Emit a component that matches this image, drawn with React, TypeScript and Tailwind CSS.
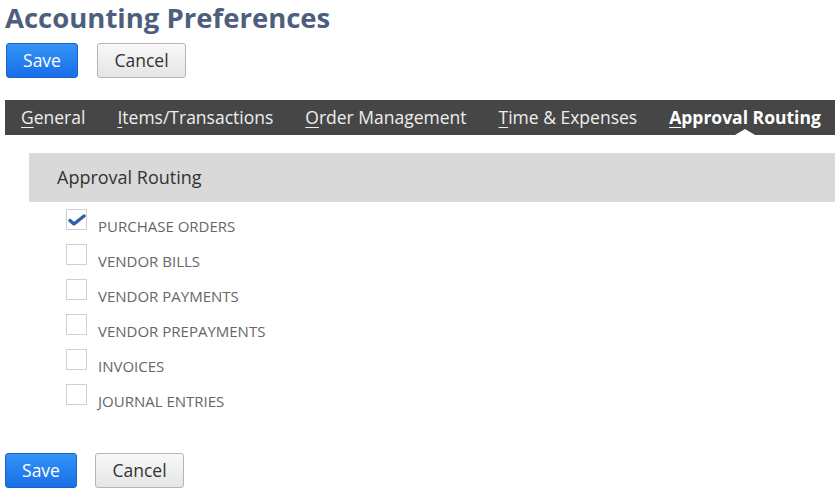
const font = { fontFamily: '"Open Sans", "Noto Sans", sans-serif' };

const tabs = [
  { key: 'G', rest: 'eneral' },
  { key: 'I', rest: 'tems/Transactions' },
  { key: 'O', rest: 'rder Management' },
  { key: 'T', rest: 'ime & Expenses' },
  { key: 'A', rest: 'pproval Routing', active: true },
];

const options = [
  { label: 'PURCHASE ORDERS', checked: true },
  { label: 'VENDOR BILLS' },
  { label: 'VENDOR PAYMENTS' },
  { label: 'VENDOR PREPAYMENTS' },
  { label: 'INVOICES' },
  { label: 'JOURNAL ENTRIES' },
];

const Buttons = ({ gap }: { gap: string }) => (
  <div className={`flex ${gap}`}>
    <button className="w-[72px] h-[35px] rounded-[3px] border border-[#1c63c9] bg-gradient-to-b from-[#3393f7] to-[#1a6ee6] text-white text-[17.5px] leading-none">
      Save
    </button>
    <button className="w-[89px] h-[35px] rounded-[3px] border border-[#b5b5b5] bg-gradient-to-b from-[#f8f8f8] to-[#e5e5e5] text-[#333] text-[17.5px] leading-none">
      Cancel
    </button>
  </div>
);

const Checkbox = ({ checked }: { checked?: boolean }) => (
  <span className="w-[21px] h-[21px] border border-[#d0d0d0] bg-white flex items-center justify-center shrink-0">
    {checked && (
      <svg width="18" height="12" viewBox="0 0 18 12">
        <path d="M2 6.5 L6 10 L16 2" fill="none" stroke="#2b5fa8" strokeWidth="3.4" strokeLinecap="round" strokeLinejoin="round" />
      </svg>
    )}
  </span>
);

export default function App() {
  return (
    <div className="w-[835px] h-[497px] bg-white overflow-hidden" style={font}>
      <h1 className="pl-[5px] pt-[1px] text-[27.5px] leading-[34px] font-bold text-[#4d5f7c]">Accounting Preferences</h1>

      <div className="pl-[6px] mt-[8px]">
        <Buttons gap="gap-[19px]" />
      </div>

      <nav className="ml-[5px] mt-[22px] h-[35px] bg-[#464646] flex items-center overflow-hidden">
        {tabs.map((t) => (
          <div key={t.key} className="relative h-full px-[16px] flex items-center shrink-0 whitespace-nowrap">
            <span className={`text-[17.5px] ${t.active ? 'font-bold text-white' : 'text-[#eeeeee]'}`}>
              <span className="underline underline-offset-[3px] decoration-1">{t.key}</span>
              {t.rest}
            </span>
            {t.active && (
              <span className="absolute bottom-0 left-1/2 -translate-x-1/2 w-0 h-0 border-l-[10px] border-r-[10px] border-b-[6px] border-l-transparent border-r-transparent border-b-white" />
            )}
          </div>
        ))}
      </nav>

      <div className="ml-[29px] mt-[18px] h-[49px] bg-[#d9d9d9] flex items-center pl-[28px]">
        <span className="text-[18px] text-[#333]">Approval Routing</span>
      </div>

      <div className="ml-[66px] mt-[7px] flex flex-col">
        {options.map((o) => (
          <label key={o.label} className="h-[35px] flex items-start gap-[11px]">
            <Checkbox checked={o.checked} />
            <span className="mt-[7px] text-[15px] leading-[20px] text-[#666]">{o.label}</span>
          </label>
        ))}
      </div>

      <div className="pl-[5px] mt-[34px]">
        <Buttons gap="gap-[18px]" />
      </div>
    </div>
  );
}
